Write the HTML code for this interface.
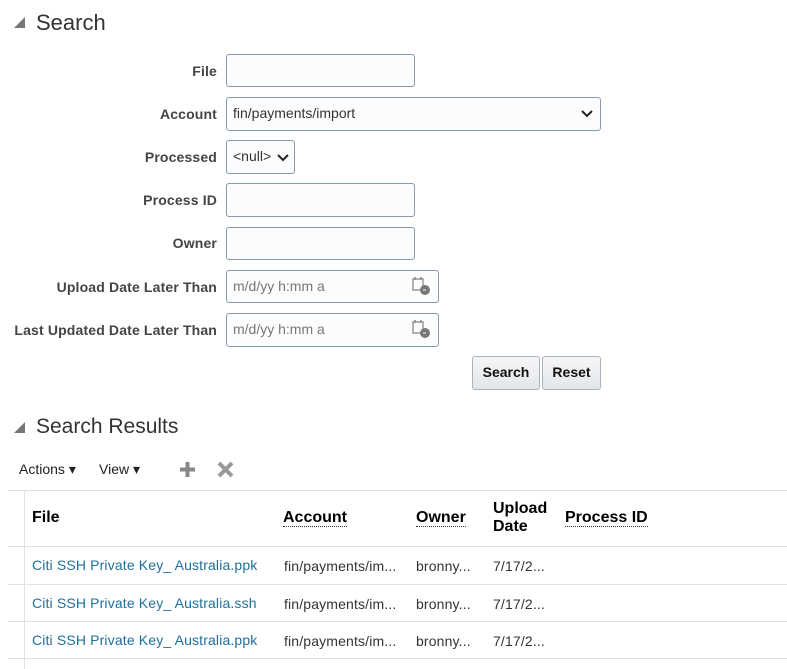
<!DOCTYPE html><html><head><style>
body{margin:0;width:787px;height:669px;background:#fff;font-family:"Liberation Sans",sans-serif;position:relative;overflow:hidden;color:#333}
.a{position:absolute}
.t{font-size:22px;color:#333}
.tri{width:0;height:0;border-left:11px solid transparent;border-bottom:11px solid #777}
.l{position:absolute;right:570px;font-size:14px;font-weight:bold;color:#444;white-space:nowrap;letter-spacing:0.15px}
.in{position:absolute;border:1px solid #8a9aa8;border-radius:3px;background:#fbfcfe;box-sizing:border-box;font-size:14px;padding-left:6px;line-height:31px;color:#333}
.ph{color:#777}
.btn{position:absolute;border:1px solid #a9b3bd;border-radius:3px;background:linear-gradient(#f5f6f7,#e3e6e9);font-size:14px;font-weight:bold;color:#111;text-align:center;line-height:31px;box-sizing:border-box}
.h{position:absolute;font-size:16px;font-weight:bold;color:#000}
.u{border-bottom:1px dotted #333}
.r{position:absolute;font-size:14px;color:#333;white-space:nowrap;letter-spacing:0.15px}
.lk{color:#1f6f9c}
.hl{position:absolute;left:8px;width:779px;height:1px;background:#dde2e6}
</style></head><body>
<div class="a tri" style="left:14px;top:17px"></div>
<div class="a t" style="left:36px;top:10px">Search</div>

<div class="l" style="top:63px">File</div><div class="in" style="left:226px;top:54px;width:189px;height:33px"></div>
<div class="l" style="top:106px">Account</div><div class="in" style="left:226px;top:97px;width:375px;height:34px">fin/payments/import<svg class="a" style="right:7px;top:11px" width="12" height="9" viewBox="0 0 12 9"><path d="M1 2l5 5 5-5" stroke="#222" stroke-width="2" fill="none"/></svg></div>
<div class="l" style="top:149px">Processed</div><div class="in" style="left:226px;top:140px;width:69px;height:34px">&lt;null&gt;<svg class="a" style="right:5px;top:12px" width="12" height="9" viewBox="0 0 12 9"><path d="M1 2l5 5 5-5" stroke="#222" stroke-width="2" fill="none"/></svg></div>
<div class="l" style="top:192px">Process ID</div><div class="in" style="left:226px;top:183px;width:189px;height:34px"></div>
<div class="l" style="top:235px">Owner</div><div class="in" style="left:226px;top:227px;width:189px;height:33px"></div>
<div class="l" style="top:279px">Upload Date Later Than</div><div class="in" style="left:226px;top:270px;width:213px;height:33px"><span class="ph">m/d/yy h:mm a</span>
<svg class="a" style="left:185px;top:5px" width="20" height="20" viewBox="0 0 20 20"><rect x="1" y="3" width="10" height="11" fill="none" stroke="#999" stroke-width="1.5"/><rect x="2" y="1" width="2" height="3" fill="#999"/><rect x="8" y="1" width="2" height="3" fill="#999"/><circle cx="13" cy="14" r="5" fill="#777"/><path d="M11 14h3" stroke="#fff"/></svg></div>
<div class="l" style="top:322px">Last Updated Date Later Than</div><div class="in" style="left:226px;top:313px;width:213px;height:34px"><span class="ph">m/d/yy h:mm a</span>
<svg class="a" style="left:185px;top:5px" width="20" height="20" viewBox="0 0 20 20"><rect x="1" y="3" width="10" height="11" fill="none" stroke="#999" stroke-width="1.5"/><rect x="2" y="1" width="2" height="3" fill="#999"/><rect x="8" y="1" width="2" height="3" fill="#999"/><circle cx="13" cy="14" r="5" fill="#777"/><path d="M11 14h3" stroke="#fff"/></svg></div>
<div class="btn" style="left:472px;top:356px;width:68px;height:34px">Search</div>
<div class="btn" style="left:542px;top:356px;width:59px;height:34px">Reset</div>

<div class="a tri" style="left:14px;top:422px"></div>
<div class="a t" style="left:36px;top:415px;font-size:21px">Search Results</div>
<div class="a" style="left:19px;top:461px;font-size:14px;color:#222">Actions <span style="font-size:14px">▾</span></div>
<div class="a" style="left:99px;top:461px;font-size:14px;color:#222">View <span style="font-size:14px">▾</span></div>
<svg class="a" style="left:179px;top:461px" width="17" height="17"><path d="M8.5 1v15M1 8.5h15" stroke="#888" stroke-width="4"/></svg>
<svg class="a" style="left:217px;top:461px" width="17" height="17"><path d="M2 2l13 13M15 2L2 15" stroke="#999" stroke-width="4"/></svg>

<div class="hl" style="top:490px"></div>
<div class="a" style="left:24px;top:490px;width:1px;height:179px;background:#dde2e6"></div>
<div class="h" style="left:32px;top:509px">File</div>
<div class="h" style="left:283px;top:509px"><span class="u">Account</span></div>
<div class="h" style="left:416px;top:509px"><span class="u">Owner</span></div>
<div class="h" style="left:493px;top:500px;line-height:18px">Upload<br>Date</div>
<div class="h" style="left:565px;top:509px"><span class="u">Process ID</span></div>
<div class="hl" style="top:546px"></div>
<div class="r lk" style="left:32px;top:557px">Citi SSH Private Key_ Australia.ppk</div><div class="r" style="left:284px;top:558px">fin/payments/im...</div><div class="r" style="left:416px;top:558px">bronny...</div><div class="r" style="left:493px;top:558px">7/17/2...</div>
<div class="hl" style="top:584px"></div>
<div class="r lk" style="left:32px;top:595px">Citi SSH Private Key_ Australia.ssh</div><div class="r" style="left:284px;top:596px">fin/payments/im...</div><div class="r" style="left:416px;top:596px">bronny...</div><div class="r" style="left:493px;top:596px">7/17/2...</div>
<div class="hl" style="top:621px"></div>
<div class="r lk" style="left:32px;top:632px">Citi SSH Private Key_ Australia.ppk</div><div class="r" style="left:284px;top:633px">fin/payments/im...</div><div class="r" style="left:416px;top:633px">bronny...</div><div class="r" style="left:493px;top:633px">7/17/2...</div>
<div class="hl" style="top:658px"></div>
</body></html>
